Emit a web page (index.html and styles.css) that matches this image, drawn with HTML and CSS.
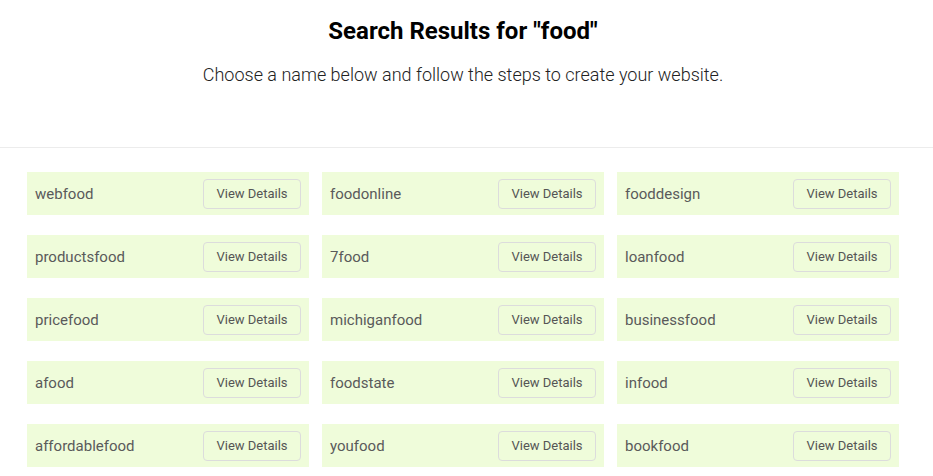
FILE: index.html
```html
<!DOCTYPE html>
<html>
<head>
<meta charset="utf-8">
<link rel="stylesheet" href="styles.css">
</head>
<body>
<header class="hero">
  <h1 class="title">Search Results for "food"</h1>
  <p class="subtitle">Choose a name below and follow the steps to create your website.</p>
</header>
<main class="results">
  <div class="grid">
    <div class="card"><span class="name">webfood</span><button class="btn">View Details</button></div>
    <div class="card"><span class="name">foodonline</span><button class="btn">View Details</button></div>
    <div class="card"><span class="name">fooddesign</span><button class="btn">View Details</button></div>
    <div class="card"><span class="name">productsfood</span><button class="btn">View Details</button></div>
    <div class="card"><span class="name">7food</span><button class="btn">View Details</button></div>
    <div class="card"><span class="name">loanfood</span><button class="btn">View Details</button></div>
    <div class="card"><span class="name">pricefood</span><button class="btn">View Details</button></div>
    <div class="card"><span class="name">michiganfood</span><button class="btn">View Details</button></div>
    <div class="card"><span class="name">businessfood</span><button class="btn">View Details</button></div>
    <div class="card"><span class="name">afood</span><button class="btn">View Details</button></div>
    <div class="card"><span class="name">foodstate</span><button class="btn">View Details</button></div>
    <div class="card"><span class="name">infood</span><button class="btn">View Details</button></div>
    <div class="card"><span class="name">affordablefood</span><button class="btn">View Details</button></div>
    <div class="card"><span class="name">youfood</span><button class="btn">View Details</button></div>
    <div class="card"><span class="name">bookfood</span><button class="btn">View Details</button></div>
  </div>
</main>
</body>
</html>
```
FILE: styles.css
```css
* { box-sizing: border-box; }
html, body { margin: 0; padding: 0; background: #fff; }
body { font-family: Roboto, "Liberation Sans", sans-serif; color: #333; }

.hero {
  text-align: center;
  padding: 16px 7px 0 0;
  height: 148px;
  border-bottom: 1px solid #ececec;
}
.title {
  margin: 0;
  font-size: 24px;
  line-height: 30px;
  font-weight: 700;
  color: #000;
}
.subtitle {
  margin: 17px 0 0;
  font-size: 18px;
  line-height: 24px;
  font-weight: 300;
  color: #222;
}

.results { padding: 24px 34px 0 27px; }
.grid {
  display: grid;
  grid-template-columns: repeat(3, 1fr);
  column-gap: 13px;
  row-gap: 20px;
}
.card {
  display: flex;
  align-items: center;
  justify-content: space-between;
  height: 43px;
  padding: 0 8px 0 8px;
  background: #effcda;
}
.name {
  font-size: 15px;
  color: #5a5a5a;
}
.btn {
  font-family: Roboto, "Liberation Sans", sans-serif;
  font-size: 13px;
  color: #555;
  background: transparent;
  border: 1px solid #dcdcdc;
  border-radius: 4px;
  width: 98px;
  height: 30px;
  padding: 0;
  cursor: pointer;
}
```
